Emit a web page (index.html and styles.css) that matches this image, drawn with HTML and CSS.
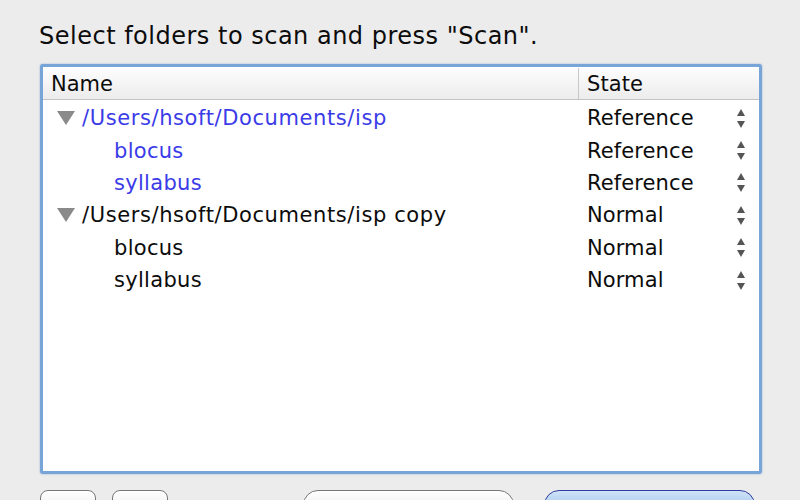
FILE: index.html
```html
<!DOCTYPE html>
<html lang="en">
<head>
	<meta charset="UTF-8">
	<title>Scan</title>
	<link rel="stylesheet" href="styles.css">
</head>
<body>
	<div class="dialog">
		<div class="prompt">Select folders to scan and press "Scan".</div>
		<div class="outline">
			<div class="head">
				<div class="col name">Name</div>
				<div class="col state">State</div>
			</div>
			<div class="row ref">
				<div class="col name"><span class="tri"></span>/Users/hsoft/Documents/isp</div>
				<div class="col state">Reference<span class="step"><i class="up"></i><i class="down"></i></span></div>
			</div>
			<div class="row ref">
				<div class="col name child">blocus</div>
				<div class="col state">Reference<span class="step"><i class="up"></i><i class="down"></i></span></div>
			</div>
			<div class="row ref">
				<div class="col name child">syllabus</div>
				<div class="col state">Reference<span class="step"><i class="up"></i><i class="down"></i></span></div>
			</div>
			<div class="row">
				<div class="col name"><span class="tri"></span>/Users/hsoft/Documents/isp copy</div>
				<div class="col state">Normal<span class="step"><i class="up"></i><i class="down"></i></span></div>
			</div>
			<div class="row">
				<div class="col name child">blocus</div>
				<div class="col state">Normal<span class="step"><i class="up"></i><i class="down"></i></span></div>
			</div>
			<div class="row">
				<div class="col name child">syllabus</div>
				<div class="col state">Normal<span class="step"><i class="up"></i><i class="down"></i></span></div>
			</div>
		</div>
		<div class="buttons">
			<div class="btn small">+</div>
			<div class="btn small">-</div>
			<div class="spacer"></div>
			<div class="btn wide">Load Results</div>
			<div class="btn wide default">Scan</div>
		</div>
	</div>
</body>
</html>
```
FILE: styles.css
```css
html, body {
	margin: 0;
	height: 100%;
	overflow: hidden;
}
body {
	background: #ececec;
	font-family: "DejaVu Sans", sans-serif;
	color: #0c0c0c;
}
.dialog {
	padding: 22px 38px 0 40px;
}
.prompt {
	font-size: 24px;
	letter-spacing: 0.5px;
	line-height: 28px;
	margin-left: -1px;
	margin-bottom: 14px;
}
.outline {
	height: 404px;
	border: 3px solid #78a4d8;
	border-radius: 3px;
	background: #fff;
	box-shadow: 0 0 2px rgba(80, 130, 200, .6);
	overflow: hidden;
}
.head, .row {
	display: flex;
	font-size: 21px;
}
.head {
	height: 31px;
	align-items: center;
	margin-bottom: 2px;
	border-top: 1px solid #fff;
	border-bottom: 1px solid #c4c4c4;
	background: linear-gradient(#fdfdfd, #ececec);
}
.head .name {
	border-right: 1px solid #c8c8c8;
	padding-left: 8px;
	align-self: stretch;
	display: flex;
	align-items: center;
}
.head .state {
	padding-left: 8px;
}
.col.name {
	width: 536px;
	flex: none;
	box-sizing: border-box;
}
.col.state {
	flex: 1;
	display: flex;
	align-items: center;
	letter-spacing: 0.1px;
}
.row {
	height: 32.4px;
	align-items: center;
}
.row .name {
	display: flex;
	align-items: center;
	padding-left: 14px;
	letter-spacing: 0.6px;
}
.row .state {
	padding-left: 8px;
}
.row .child {
	padding-left: 71px;
	letter-spacing: 0.3px;
}
.row.ref .name {
	color: #3b3be8;
}
.tri {
	width: 0;
	height: 0;
	border-left: 9px solid transparent;
	border-right: 9px solid transparent;
	border-top: 14px solid #8a8a8a;
	margin-right: 7px;
}
.step {
	margin-left: auto;
	margin-right: 14px;
	display: flex;
	flex-direction: column;
	gap: 5px;
}
.step i {
	width: 0;
	height: 0;
	border-left: 4px solid transparent;
	border-right: 4px solid transparent;
}
.step .up {
	border-bottom: 7px solid #555;
}
.step .down {
	border-top: 7px solid #555;
}
.buttons {
	display: flex;
	margin-top: 16px;
	padding-right: 7px;
	gap: 16px;
}
.btn {
	height: 30px;
	box-sizing: border-box;
	border: 1px solid #777;
	border-radius: 8px;
	background: linear-gradient(#fff, #e6e6e6);
	font-size: 18px;
	text-align: center;
	line-height: 28px;
	padding-top: 4px;
}
.btn.small {
	width: 56px;
}
.spacer {
	flex: 1;
}
.btn.wide {
	width: 211px;
	border-radius: 15px;
}
.btn.default {
	margin-left: 14px;
	border-color: #2d3c9e;
	background: linear-gradient(#cfe3f8, #8ab8e8);
}
```
